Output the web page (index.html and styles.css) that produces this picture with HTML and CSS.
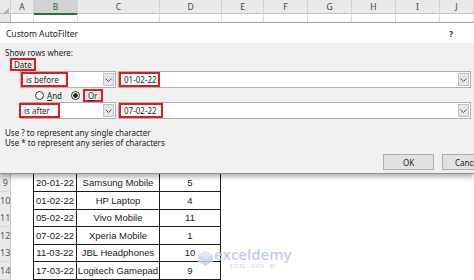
FILE: index.html
```html
<!DOCTYPE html>
<html lang="en">
<head>
  <meta charset="UTF-8" />
  <meta name="viewport" content="width=device-width, initial-scale=1" />
  <title>Custom AutoFilter</title>
  <link rel="stylesheet" href="styles.css">
</head>
<body>
  <div class="col-head">
    <span class="corner"></span>
    <span>A</span>
    <span class="active">B</span>
    <span>C</span>
    <span>D</span>
    <span>E</span>
    <span>F</span>
    <span>G</span>
    <span>H</span>
    <span>I</span>
    <span>J</span>
  </div>
  <div class="strip">
    <span class="rh"></span><span></span><span></span><span></span><span></span><span></span><span></span><span></span><span></span><span></span><span></span>
  </div>

  <div class="dialog">
    <div class="title-bar">
      <span>Custom AutoFilter</span>
      <span class="help">?</span>
    </div>
    <div class="dialog-body">
      <div class="show">Show rows where:</div>
      <div class="field"><span class="mark">Date</span></div>

      <div class="crit-row">
        <div class="combo op">
          <span class="mark">is before</span>
          <span class="drop"><svg width="7" height="4" viewBox="0 0 7 4"><path d="M0.5 0.5 L3.5 3.5 L6.5 0.5" fill="none" stroke="#555" stroke-width="1"/></svg></span>
        </div>
        <div class="combo val">
          <span class="mark">01-02-22</span>
          <span class="drop"><svg width="7" height="4" viewBox="0 0 7 4"><path d="M0.5 0.5 L3.5 3.5 L6.5 0.5" fill="none" stroke="#555" stroke-width="1"/></svg></span>
        </div>
      </div>

      <div class="radio-row">
        <label class="radio"><span class="circle"></span><span><u>A</u>nd</span></label>
        <label class="radio"><span class="circle on"></span><span class="mark"><u>O</u>r</span></label>
      </div>

      <div class="crit-row second">
        <div class="combo op">
          <span class="mark">is after</span>
          <span class="drop"><svg width="7" height="4" viewBox="0 0 7 4"><path d="M0.5 0.5 L3.5 3.5 L6.5 0.5" fill="none" stroke="#555" stroke-width="1"/></svg></span>
        </div>
        <div class="combo val">
          <span class="mark">07-02-22</span>
          <span class="drop"><svg width="7" height="4" viewBox="0 0 7 4"><path d="M0.5 0.5 L3.5 3.5 L6.5 0.5" fill="none" stroke="#555" stroke-width="1"/></svg></span>
        </div>
      </div>

      <div class="hints">
        <p>Use ? to represent any single character</p>
        <p>Use * to represent any series of characters</p>
      </div>

      <div class="buttons">
        <button>OK</button>
        <button>Cancel</button>
      </div>
    </div>
  </div>

  <div class="rows">
    <div class="row"><span class="rh">9</span><span class="a"></span><span class="cell">20-01-22</span><span class="cell">Samsung Mobile</span><span class="cell">5</span></div>
    <div class="row"><span class="rh">10</span><span class="a"></span><span class="cell">01-02-22</span><span class="cell">HP Laptop</span><span class="cell">4</span></div>
    <div class="row"><span class="rh">11</span><span class="a"></span><span class="cell">05-02-22</span><span class="cell">Vivo Mobile</span><span class="cell">11</span></div>
    <div class="row"><span class="rh">12</span><span class="a"></span><span class="cell">07-02-22</span><span class="cell">Xperia Mobile</span><span class="cell">1</span></div>
    <div class="row"><span class="rh">13</span><span class="a"></span><span class="cell">11-03-22</span><span class="cell">JBL Headphones</span><span class="cell">10</span></div>
    <div class="row"><span class="rh">14</span><span class="a"></span><span class="cell">17-03-22</span><span class="cell">Logitech Gamepad</span><span class="cell">9</span></div>
  </div>

  <div class="watermark">
    <svg class="logo" width="17" height="16" viewBox="0 0 17 16">
      <path d="M8.5 1 L16 5 L16 12 L8.5 15.5 L1 12 L1 5 Z" fill="#c9d3ea"/>
      <path d="M8.5 1 L16 5 L8.5 9 L1 5 Z" fill="#dde4f3"/>
      <path d="M8.5 9 L8.5 15.5" stroke="#b4c0df" stroke-width="1"/>
    </svg>
    <div class="brand">
      <span class="name">exceldemy</span>
      <span class="tag">EXCEL · DATA · BI</span>
    </div>
  </div>
</body>
</html>
```

FILE: styles.css
```css
* {
  box-sizing: border-box;
}

body {
  margin: 0;
  width: 474px;
  height: 280px;
  overflow: hidden;
  position: relative;
  background: #fff;
  font-family: 'Noto Sans', sans-serif;
  color: #222;
}

/* spreadsheet column header */
.col-head,
.strip {
  display: grid;
  grid-template-columns: 11px 23px 44px 82px 62px 42px 44px 44px 44px 44px 34px;
}

.col-head {
  height: 14px;
  background: #e9e9e9;
  border-bottom: 1px solid #c4c4c4;
}

.col-head span {
  border-right: 1px solid #d2d2d2;
  font-size: 8.5px;
  line-height: 13px;
  text-align: center;
  color: #444;
}

.col-head .corner {
  background: linear-gradient(135deg, transparent 55%, #b5b5b5 55%) no-repeat right 1px bottom 1px / 7px 7px;
}

.col-head .active {
  background: #d3d3d3;
  color: #1e6b40;
  border-bottom: 2px solid #217346;
}

.strip {
  height: 8px;
}

.strip span {
  border-right: 1px solid #dcdcdc;
}

.strip .rh {
  background: #e9e9e9;
  border-right-color: #c4c4c4;
}

/* dialog */
.dialog {
  position: relative;
  z-index: 1;
  height: 152px;
  background: #f0f0f0;
  border-top: 1px solid #a3a3a3;
  border-bottom: 1px solid #8e8e8e;
  box-shadow: 0 3px 5px rgba(0, 0, 0, 0.3);
  font-size: 8px;
}

.title-bar {
  height: 20px;
  background: #fff;
  display: flex;
  align-items: center;
  justify-content: space-between;
  padding: 0 21px 0 6px;
  font-size: 8.5px;
}

.help {
  font-weight: 700;
  font-size: 8px;
}

.dialog-body {
  padding: 5px 0 0 5px;
  overflow: hidden;
}

.show {
  line-height: 10px;
}

.mark {
  border: 2px solid #e01b22;
  display: inline-flex;
  align-items: center;
  white-space: nowrap;
}

.field {
  height: 13px;
  padding-left: 5px;
}

.field .mark {
  height: 13px;
  padding: 0 2px;
}

.crit-row {
  display: flex;
  gap: 2px;
  padding-left: 15px;
  height: 17px;
}

.combo {
  display: flex;
  align-items: center;
  background: #fff;
  border: 1px solid #b0b0b0;
  height: 100%;
}

.combo .mark {
  height: 100%;
  padding: 0 3px;
}

.combo.op {
  width: 96px;
}

.combo.op .mark {
  width: 47px;
}

.combo.val {
  width: 353px;
}

.combo.val .mark {
  width: 41px;
}

.crit-row.second .combo.op .mark {
  width: 41px;
  margin-left: -2px;
}

.crit-row.second .combo.val .mark {
  width: 44px;
}

.drop {
  margin-left: auto;
  margin-right: 1px;
  width: 11px;
  height: 13px;
  background: #e6e6e6;
  border: 1px solid #c2c2c2;
  display: flex;
  align-items: center;
  justify-content: center;
}

.radio-row {
  display: flex;
  align-items: center;
  height: 14px;
  padding-left: 30px;
  gap: 9px;
}

.radio {
  display: flex;
  align-items: center;
  gap: 3px;
}

.circle {
  width: 9px;
  height: 9px;
  border: 1px solid #333;
  border-radius: 50%;
  background: #fff;
}

.circle.on {
  background: radial-gradient(circle, #222 0 2px, #fff 2.5px);
}

.radio .mark {
  height: 13px;
  padding: 0 3px;
}

.hints {
  margin-top: 9px;
}

.hints p {
  margin: 0;
  line-height: 10px;
}

.buttons {
  display: flex;
  gap: 8px;
  margin-top: 6px;
  padding-left: 378px;
}

.buttons button {
  flex: none;
  width: 51px;
  height: 16px;
  padding: 0;
  background: #e1e1e1;
  border: 1px solid #adadad;
  font-family: inherit;
  font-size: 8px;
  color: #222;
}

/* sheet rows below the dialog */
.row {
  display: grid;
  grid-template-columns: 11px 23px 43px 83px 61px;
  height: 17.6px;
}

.row .rh {
  background: #e9e9e9;
  border-right: 1px solid #c4c4c4;
  border-bottom: 1px solid #d6d6d6;
  font-size: 9px;
  color: #555;
  text-align: right;
  padding-right: 2px;
  line-height: 17px;
  overflow: hidden;
  white-space: nowrap;
}

.row .cell {
  border-right: 1px solid #1a1a1a;
  border-bottom: 1px solid #1a1a1a;
  font-family: 'Liberation Sans', sans-serif;
  font-size: 9.5px;
  text-align: center;
  line-height: 17px;
  white-space: nowrap;
  color: #1a1a1a;
}

.row .a {
  border-right: 1px solid #1a1a1a;
}

/* watermark overlay */
.watermark {
  position: absolute;
  left: 197px;
  top: 247px;
  display: flex;
  align-items: flex-start;
  opacity: 0.85;
}

.logo {
  margin-top: 3px;
}

.brand {
  display: flex;
  flex-direction: column;
  align-items: center;
}

.name {
  font-family: 'Open Sans', sans-serif;
  font-size: 15px;
  line-height: 15px;
  color: #b9c5e6;
  font-weight: 600;
}

.tag {
  margin-top: 2px;
  font-size: 4.5px;
  letter-spacing: 0.6px;
  color: #c3c3c3;
  line-height: 5px;
}
```
